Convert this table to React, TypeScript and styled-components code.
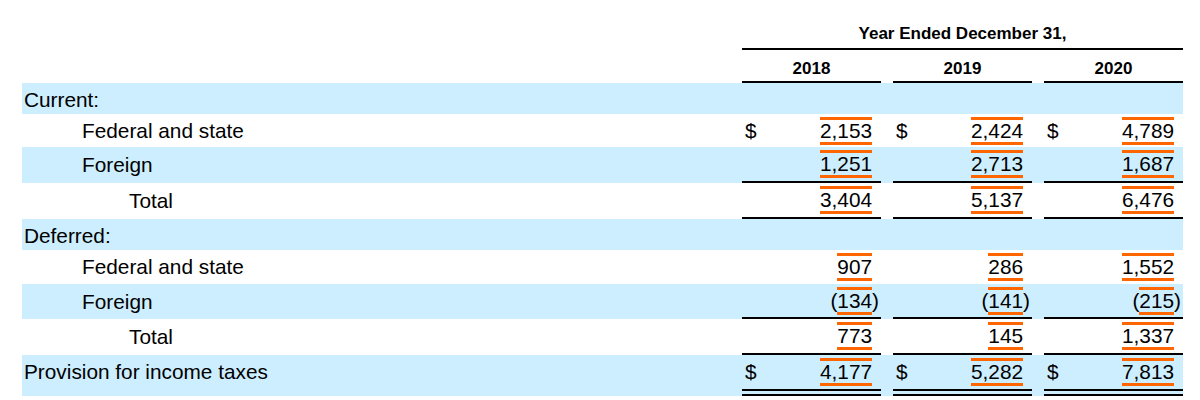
import React from "react";
import styled, { createGlobalStyle } from "styled-components";

const Global = createGlobalStyle`
  html, body { margin: 0; padding: 0; background: #fff; }
  body { font-family: "Liberation Sans", Arial, sans-serif; color: #000; }
`;

const Page = styled.div`
  width: 1200px;
  height: 400px;
  padding-left: 22px;
  box-sizing: border-box;
  overflow: hidden;
`;

const Table = styled.div`
  width: 1161px;
  display: flex;
  flex-direction: column;
`;

const GridRow = styled.div<{ $blue?: boolean; $h: number }>`
  display: grid;
  grid-template-columns: 1fr 139px 139px 139px;
  column-gap: 12px;
  height: ${(p) => p.$h}px;
  box-sizing: border-box;
  background: ${(p) => (p.$blue ? "#cceeff" : "transparent")};
`;

const HeadCell = styled.div`
  grid-column: 2 / 5;
  font-weight: bold;
  font-size: 17px;
  line-height: 20px;
  text-align: center;
  padding-top: 24px;
  border-bottom: 2px solid #000;
  box-sizing: border-box;
`;

const YearCell = styled.div`
  font-weight: bold;
  font-size: 17px;
  line-height: 20px;
  text-align: center;
  padding-top: 9px;
  border-bottom: 2px solid #000;
  box-sizing: border-box;
`;

const Label = styled.div<{ $indent: number; $pb: number }>`
  font-size: 20.8px;
  line-height: 22px;
  display: flex;
  align-items: center;
  padding-left: ${(p) => p.$indent}px;
  padding-top: ${(p) => (p.$pb ? 0 : p.$indent === 2 ? 2 : 0)}px;
  padding-bottom: ${(p) => p.$pb}px;
  box-sizing: border-box;
`;

const ValueCell = styled.div<{ $rule?: "single" | "double" }>`
  display: flex;
  justify-content: space-between;
  align-items: center;
  padding: 0 2px 0 3px;
  font-size: 20.8px;
  box-sizing: border-box;
  border-bottom: ${(p) =>
    p.$rule === "single" ? "2px solid #000" : p.$rule === "double" ? "7px double #000" : "none"};
`;

const Dollar = styled.span`
  line-height: 22px;
`;

const Amount = styled.span`
  display: flex;
  align-items: center;
`;

const Num = styled.span`
  display: inline-block;
  line-height: 22px;
  border-top: 3px solid #ff6600;
  border-bottom: 3px solid #ff6600;
`;

const Paren = styled.span<{ $hidden?: boolean }>`
  line-height: 22px;
  visibility: ${(p) => (p.$hidden ? "hidden" : "visible")};
`;

type Row = {
  label: string;
  indent: number;
  h: number;
  values?: number[];
  dollar?: boolean;
  rule?: "single" | "double";
};

const rows: Row[] = [
  { label: "Current:", indent: 2, h: 31 },
  { label: "Federal and state", indent: 60, h: 33, values: [2153, 2424, 4789], dollar: true },
  { label: "Foreign", indent: 60, h: 36, values: [1251, 2713, 1687], rule: "single" },
  { label: "Total", indent: 107, h: 36, values: [3404, 5137, 6476], rule: "single" },
  { label: "Deferred:", indent: 2, h: 31 },
  { label: "Federal and state", indent: 60, h: 34, values: [907, 286, 1552] },
  { label: "Foreign", indent: 60, h: 35, values: [-134, -141, -215], rule: "single" },
  { label: "Total", indent: 107, h: 36, values: [773, 145, 1337], rule: "single" },
  { label: "Provision for income taxes", indent: 2, h: 41, values: [4177, 5282, 7813], dollar: true, rule: "double" },
];

const fmt = (n: number) => Math.abs(n).toLocaleString("en-US");

export default function App() {
  return (
    <>
      <Global />
      <Page>
        <Table>
          <GridRow $h={50}>
            <div />
            <HeadCell>Year Ended December 31,</HeadCell>
          </GridRow>
          <GridRow $h={33}>
            <div />
            {["2018", "2019", "2020"].map((y) => (
              <YearCell key={y}>{y}</YearCell>
            ))}
          </GridRow>
          {rows.map((r, i) => (
            <GridRow key={i} $h={r.h} $blue={i % 2 === 0}>
              <Label $indent={r.indent} $pb={r.rule === "double" ? 7 : 0}>
                {r.label}
              </Label>
              {r.values
                ? r.values.map((v, j) => (
                    <ValueCell key={j} $rule={r.rule}>
                      <Dollar>{r.dollar ? "$" : ""}</Dollar>
                      <Amount>
                        {v < 0 && <Paren>(</Paren>}
                        <Num>{fmt(v)}</Num>
                        <Paren $hidden={v >= 0}>)</Paren>
                      </Amount>
                    </ValueCell>
                  ))
                : [0, 1, 2].map((j) => <div key={j} />)}
            </GridRow>
          ))}
        </Table>
      </Page>
    </>
  );
}
